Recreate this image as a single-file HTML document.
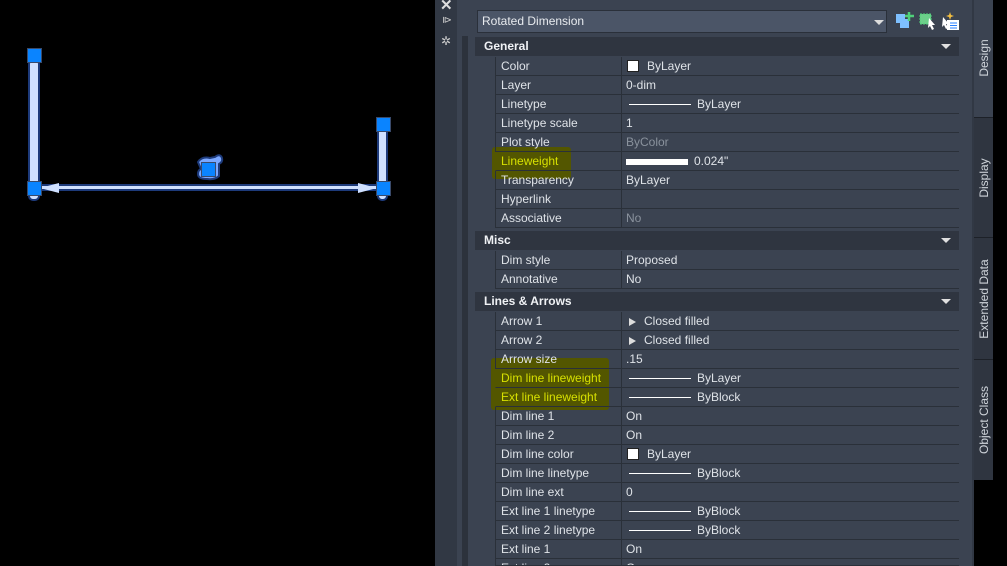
<!DOCTYPE html>
<html style="overflow:hidden;width:1007px;height:566px"><head><style>
*{margin:0;padding:0;box-sizing:border-box}
body{width:1007px;height:566px;background:#000;position:relative;overflow:hidden;font-family:"Liberation Sans",sans-serif;font-size:12px;color:#dfe3e8}
.a{position:absolute}
.hdr{position:absolute;left:475px;width:484px;height:19px;background:#2f3540;font-weight:bold;color:#f0f2f5;padding-left:9px;line-height:18px}
.hdr:after{content:"";position:absolute;right:8px;top:7px;border-left:5px solid transparent;border-right:5px solid transparent;border-top:5px solid #e0e0e0}
.row{position:absolute;left:495px;width:464px;height:19px;border-left:1px solid #2a3039;border-bottom:1px solid #2a3039;line-height:18px}
.row .n{position:absolute;left:5px;top:0}
.row .v{position:absolute;left:125px;top:0;width:339px;height:18px;border-left:1px solid #2a3039;padding-left:4px}
.gray{color:#8a929d}
.y{color:#d7e000}
.ln{display:inline-block;width:62px;height:1px;background:#fff;vertical-align:middle;margin:0 6px 0 3px}
.sw{display:inline-block;width:12px;height:12px;background:#fff;border:1px solid #222;vertical-align:-2px;margin-right:8px;margin-left:1px}
.ar{display:inline-block;width:0;height:0;border-top:4px solid transparent;border-bottom:4px solid transparent;border-left:7px solid #ddd;margin:0 8px 0 3px;vertical-align:-1px}
.tab{position:absolute;left:974px;width:19px;background:#2f3540;border-top:1px solid #1d2128}
.tab span{position:absolute;left:50%;top:50%;transform:translate(-50%,-50%) rotate(-90deg);white-space:nowrap;color:#cfd4da;font-size:12px}
</style></head><body>
<svg class="a" style="left:0;top:0" width="435" height="566">
<g stroke="#1d3a7a" stroke-width="2">
<rect x="29" y="60" width="10" height="140" rx="4" fill="#cfe0ff"/>
<rect x="378" y="125" width="9" height="75" rx="4" fill="#cfe0ff"/>
<rect x="40" y="185" width="338" height="5" fill="#cfe0ff"/>
</g>
<polygon points="40,188 59,183 59,193" fill="#cfe0ff"/>
<polygon points="377,188 358,183 358,193" fill="#cfe0ff"/>
<path d="M198 162 q4-6 12-4 l5-1 q5-4 7 1 q1 4-3 6 v12 q-4 4-12 3 q-9 0-9-5 q0-4 3-5 z" fill="#7aa7ff" stroke="#1d3a7a" stroke-width="2"/>
<g fill="#0a84ff" stroke="#3a4a6a" stroke-width="1">
<rect x="27.5" y="48.5" width="14" height="14"/>
<rect x="27.5" y="181.5" width="14" height="14"/>
<rect x="376.5" y="117.5" width="14" height="14"/>
<rect x="376.5" y="181.5" width="14" height="14"/>
<rect x="201.5" y="162.5" width="14" height="14"/>
</g>
</svg>
<div class="a" style="left:435px;top:0;width:22px;height:566px;background:#313844"></div>
<div class="a" style="left:440px;top:-4px;color:#ddd;font-size:15px;font-weight:bold">✕</div>
<div class="a" style="left:442px;top:15px;color:#ccc;font-size:10px">⧐</div>
<div class="a" style="left:441px;top:34px;color:#ccc;font-size:12px">✲</div>
<div class="a" style="left:457px;top:0;width:517px;height:566px;background:#3b4351"></div>
<div class="a" style="left:462px;top:36px;width:6px;height:530px;background:#2c323c"></div>
<div class="a" style="left:477px;top:10px;width:410px;height:23px;background:#4b5567;border:1px solid #2a303a;padding-left:4px;line-height:21px;color:#e8ebef">Rotated Dimension</div>
<div class="a" style="left:874px;top:20px;border-left:5px solid transparent;border-right:5px solid transparent;border-top:5px solid #ddd"></div>
<svg class="a" style="left:894px;top:10px" width="70" height="22">
<rect x="2" y="4" width="9" height="9" fill="#7ec0ff"/><rect x="6" y="9" width="9" height="9" fill="#7ec0ff"/>
<path d="M15 2v9M11 6h9" stroke="#4fd07a" stroke-width="2.5"/>
<rect x="26" y="4" width="11" height="10" fill="#6ccf8a" stroke="#4fd07a" stroke-dasharray="2,1"/>
<path d="M35 8l6 7-3 0 2 4-2 1-2-4-2 2z" fill="#fff"/>
<path d="M49 7l6 7-3 0 2 4-2 1-2-4-2 2z" fill="#fff"/>
<rect x="53" y="10" width="12" height="10" fill="#fff"/><path d="M56 13h7M56 15.5h7M56 18h7" stroke="#2a80ff"/>
<path d="M56 2l1 3 3 1-3 1-1 3-1-3-3-1 3-1z" fill="#f5c040"/>
</svg>
<div class="a" style="left:492px;top:147px;width:79px;height:32px;background:#535600;border-radius:3px"></div>
<div class="a" style="left:491px;top:358px;width:118px;height:52px;background:#535600;border-radius:3px"></div>

<div class="hdr" style="top:37px">General</div>
<div class="row" style="top:57px"><span class="n">Color</span><span class="v"><span class="sw"></span>ByLayer</span></div>
<div class="row" style="top:76px"><span class="n">Layer</span><span class="v">0-dim</span></div>
<div class="row" style="top:95px"><span class="n">Linetype</span><span class="v"><span class="ln"></span>ByLayer</span></div>
<div class="row" style="top:114px"><span class="n">Linetype scale</span><span class="v">1</span></div>
<div class="row" style="top:133px"><span class="n">Plot style</span><span class="v gray">ByColor</span></div>
<div class="row" style="top:152px;border-left-color:transparent"><span class="n y">Lineweight</span><span class="v"><span class="ln" style="height:6px;margin-left:0"></span>0.024"</span></div>
<div class="row" style="top:171px"><span class="n">Transparency</span><span class="v">ByLayer</span></div>
<div class="row" style="top:190px"><span class="n">Hyperlink</span><span class="v"></span></div>
<div class="row" style="top:209px"><span class="n">Associative</span><span class="v gray">No</span></div>

<div class="hdr" style="top:231px">Misc</div>
<div class="row" style="top:251px"><span class="n">Dim style</span><span class="v">Proposed</span></div>
<div class="row" style="top:270px"><span class="n">Annotative</span><span class="v">No</span></div>

<div class="hdr" style="top:292px">Lines &amp; Arrows</div>
<div class="row" style="top:312px"><span class="n">Arrow 1</span><span class="v"><span class="ar"></span>Closed filled</span></div>
<div class="row" style="top:331px"><span class="n">Arrow 2</span><span class="v"><span class="ar"></span>Closed filled</span></div>
<div class="row" style="top:350px"><span class="n">Arrow size</span><span class="v">.15</span></div>
<div class="row" style="top:369px;border-left-color:transparent"><span class="n y">Dim line lineweight</span><span class="v"><span class="ln"></span>ByLayer</span></div>
<div class="row" style="top:388px;border-left-color:transparent"><span class="n y">Ext line lineweight</span><span class="v"><span class="ln"></span>ByBlock</span></div>
<div class="row" style="top:407px"><span class="n">Dim line 1</span><span class="v">On</span></div>
<div class="row" style="top:426px"><span class="n">Dim line 2</span><span class="v">On</span></div>
<div class="row" style="top:445px"><span class="n">Dim line color</span><span class="v"><span class="sw"></span>ByLayer</span></div>
<div class="row" style="top:464px"><span class="n">Dim line linetype</span><span class="v"><span class="ln"></span>ByBlock</span></div>
<div class="row" style="top:483px"><span class="n">Dim line ext</span><span class="v">0</span></div>
<div class="row" style="top:502px"><span class="n">Ext line 1 linetype</span><span class="v"><span class="ln"></span>ByBlock</span></div>
<div class="row" style="top:521px"><span class="n">Ext line 2 linetype</span><span class="v"><span class="ln"></span>ByBlock</span></div>
<div class="row" style="top:540px"><span class="n">Ext line 1</span><span class="v">On</span></div>
<div class="row" style="top:559px;height:7px;overflow:hidden"><span class="n">Ext line 2</span><span class="v">On</span></div>

<div class="a" style="left:972px;top:0;width:2px;height:566px;background:#313844"></div>
<div class="a" style="left:993px;top:0;width:14px;height:566px;background:#000"></div>
<div class="tab" style="top:0;height:117px;background:#3b4351;border:none"><span style="top:58px">Design</span></div>
<div class="tab" style="top:117px;height:120px"><span>Display</span></div>
<div class="tab" style="top:237px;height:122px"><span>Extended Data</span></div>
<div class="tab" style="top:359px;height:121px"><span>Object Class</span></div>
<div class="a" style="left:976px;top:481px;width:31px;height:85px;background:#000"></div>
</body></html>
